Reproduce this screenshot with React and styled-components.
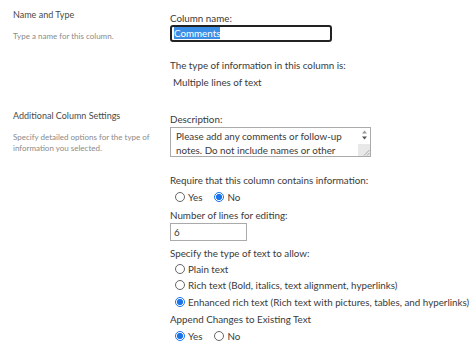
import React from "react";
import styled, { createGlobalStyle } from "styled-components";

const GlobalStyle = createGlobalStyle`
  html, body {
    margin: 0;
    padding: 0;
    background: #fff;
  }
  body {
    font-family: Lato, "Open Sans", sans-serif;
    color: #3a3a3a;
  }
`;

function Radio({ checked, label }) {
  return (
    <RadioLabel>
      <RadioDot checked={checked} />
      <span>{label}</span>
    </RadioLabel>
  );
}

function App() {
  return (
    <Page>
      <GlobalStyle />
      <Section>
        <SideInfo>
          <SideTitle>Name and Type</SideTitle>
          <SideText>Type a name for this column.</SideText>
        </SideInfo>
        <Fields>
          <Label line={14}>Column name:</Label>
          <TextBox focused width={162}>
            <Selected>Comments</Selected>
          </TextBox>
          <Label top={15}>The type of information in this column is:</Label>
          <Value>Multiple lines of text</Value>
        </Fields>
      </Section>

      <Section top={18}>
        <SideInfo>
          <SideTitle>Additional Column Settings</SideTitle>
          <SideText>
            Specify detailed options for the type of
            <br />
            information you selected.
          </SideText>
        </SideInfo>
        <Fields>
          <Label line={14}>Description:</Label>
          <TextArea>
            <AreaText>
              Please add any comments or follow-up
              <br />
              notes. Do not include names or other
            </AreaText>
            <ScrollBar>
              <svg width="7" height="12" viewBox="0 0 7 12">
                <path d="M3.5 1.5 L6 4.5 L1 4.5 Z" fill="#999" />
                <path d="M3.5 10.5 L6 7.5 L1 7.5 Z" fill="#555" />
              </svg>
              <Grip>
                <svg width="9" height="9" viewBox="0 0 9 9">
                  <path d="M8.5 3 L3 8.5 M8.5 6 L6 8.5" stroke="#999" strokeWidth="0.8" />
                </svg>
              </Grip>
            </ScrollBar>
          </TextArea>

          <Label top={15}>Require that this column contains information:</Label>
          <RadioRow>
            <Radio label="Yes" />
            <Radio checked label="No" />
          </RadioRow>

          <Label top={1}>Number of lines for editing:</Label>
          <TextBox width={77}>6</TextBox>

          <Label top={4}>Specify the type of text to allow:</Label>
          <RadioList>
            <Radio label="Plain text" />
            <Radio label="Rich text (Bold, italics, text alignment, hyperlinks)" />
            <Radio checked label="Enhanced rich text (Rich text with pictures, tables, and hyperlinks)" />
          </RadioList>

          <Label top={0.5}>Append Changes to Existing Text</Label>
          <RadioRow>
            <Radio checked label="Yes" />
            <Radio label="No" />
          </RadioRow>
        </Fields>
      </Section>
    </Page>
  );
}

const Page = styled.div`
  width: 474px;
  height: 348px;
  overflow: hidden;
  padding-top: 7px;
  box-sizing: border-box;
`;

const Section = styled.div`
  display: grid;
  grid-template-columns: 170px 1fr;
  margin-top: ${(p) => p.top || 0}px;
`;

const SideInfo = styled.div`
  padding-left: 13px;
`;

const SideTitle = styled.div`
  font-size: 9px;
  line-height: 16px;
  color: #4a4a4a;
`;

const SideText = styled.div`
  margin-top: 7.5px;
  font-size: 8px;
  line-height: 11px;
  color: #8a8a8a;
`;

const Fields = styled.div`
  display: flex;
  flex-direction: column;
  align-items: flex-start;
  padding-top: 4px;
`;

const Label = styled.div`
  font-size: 9.8px;
  line-height: ${(p) => p.line || 16}px;
  color: #3a3a3a;
  margin-top: ${(p) => p.top || 0}px;
  white-space: nowrap;
`;

const Value = styled.div`
  font-size: 9.8px;
  line-height: 16px;
  color: #3a3a3a;
  padding-left: 3px;
  margin-top: 1px;
`;

const TextBox = styled.div`
  box-sizing: border-box;
  width: ${(p) => p.width}px;
  height: ${(p) => (p.focused ? 17 : 18)}px;
  border: ${(p) => (p.focused ? "2px solid #222" : "1px solid #aaa")};
  border-radius: ${(p) => (p.focused ? "3px" : "0")};
  padding: 0 ${(p) => (p.focused ? "2px" : "3px")};
  font-size: 9.8px;
  line-height: ${(p) => (p.focused ? "13px" : "16px")};
  color: #3a3a3a;
`;

const Selected = styled.span`
  background: #3a8ee6;
  color: #fff;
`;

const TextArea = styled.div`
  box-sizing: border-box;
  display: flex;
  width: 201px;
  height: 30px;
  margin-top: 1px;
  border: 1px solid #aaa;
`;

const AreaText = styled.div`
  flex: 1;
  padding: 1px 0 0 5px;
  font-size: 9.8px;
  line-height: 14px;
  color: #3a3a3a;
  white-space: nowrap;
`;

const ScrollBar = styled.div`
  width: 12px;
  display: flex;
  flex-direction: column;
  align-items: center;
  justify-content: space-between;
  padding-top: 1px;
`;

const Grip = styled.div`
  width: 12px;
  height: 12px;
  background: #e8e8e8;
  display: flex;
  align-items: flex-end;
  justify-content: flex-end;
`;

const RadioRow = styled.div`
  display: flex;
  gap: 12px;
  padding-left: 5px;
  margin-top: 1px;
`;

const RadioList = styled.div`
  display: flex;
  flex-direction: column;
  padding-left: 5px;
`;

const RadioLabel = styled.label`
  display: flex;
  align-items: center;
  gap: 3px;
  font-size: 9.8px;
  line-height: 16.5px;
  color: #3a3a3a;
  white-space: nowrap;
`;

const RadioDot = styled.span`
  box-sizing: border-box;
  width: 10px;
  height: 10px;
  border-radius: 50%;
  border: 1px solid ${(p) => (p.checked ? "#1a73e8" : "#666")};
  background: ${(p) =>
    p.checked ? "radial-gradient(circle, #1a73e8 0 2.8px, #fff 3.3px)" : "#fff"};
`;

export default App;
